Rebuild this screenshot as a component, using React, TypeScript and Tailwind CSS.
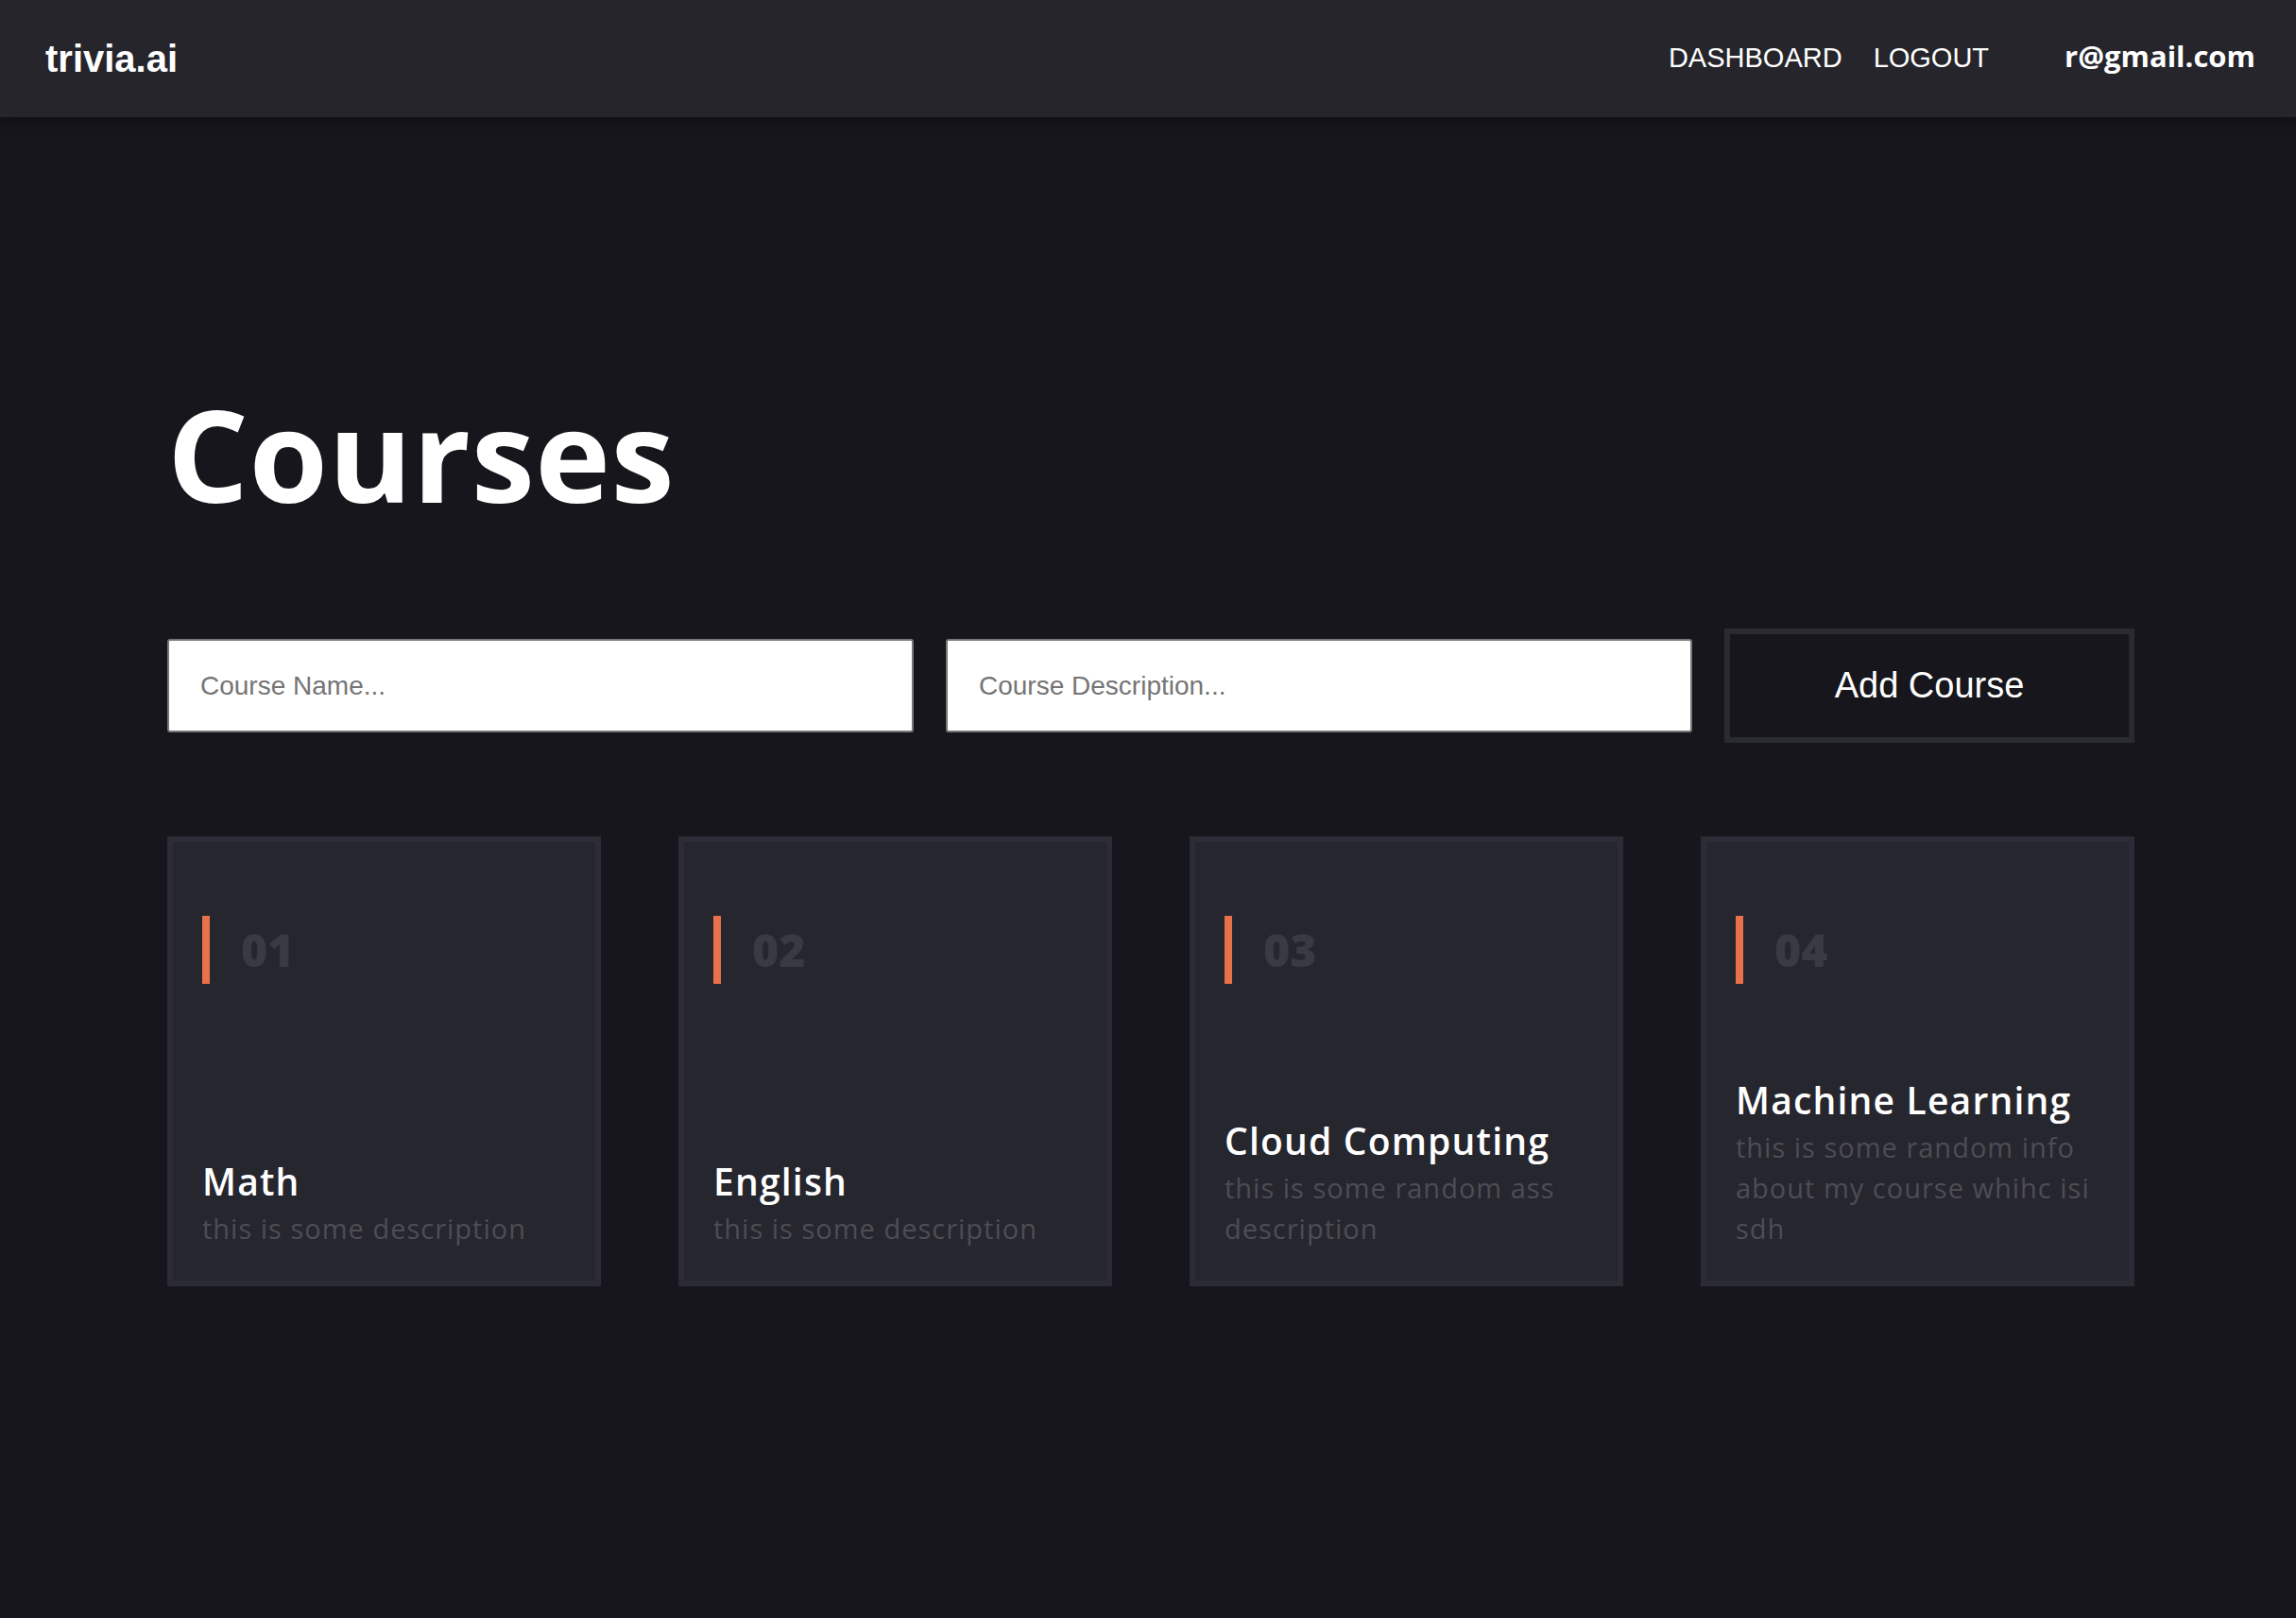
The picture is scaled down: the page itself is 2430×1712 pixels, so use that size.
const courses = [
  { num: "01", title: "Math", description: "this is some description" },
  { num: "02", title: "English", description: "this is some description" },
  { num: "03", title: "Cloud Computing", description: "this is some random ass description" },
  { num: "04", title: "Machine Learning", description: "this is some random info about my course whihc isi sdh" },
];

const heading = { fontFamily: '"Open Sans", "Noto Sans", sans-serif' };
const plain = { fontFamily: '"Liberation Sans", Arial, sans-serif' };

function Navbar() {
  return (
    <nav className="flex h-[124px] items-center justify-between bg-[#25252b] pl-[48px] pr-[43px] shadow-[0_4px_14px_rgba(0,0,0,0.35)]">
      <span className="text-[40px] font-bold text-white" style={plain}>
        trivia.ai
      </span>
      <div className="flex items-center">
        <a className="text-[29px] text-white" style={plain}>
          DASHBOARD
        </a>
        <a className="ml-[33px] text-[29px] text-white" style={plain}>
          LOGOUT
        </a>
        <span className="mb-[6px] ml-[80px] text-[31px] font-bold text-white" style={heading}>
          r@gmail.com
        </span>
      </div>
    </nav>
  );
}

function CourseCard({ num, title, description }: (typeof courses)[number]) {
  return (
    <div className="flex h-[476px] flex-col justify-between border-[6px] border-[#2b2c35] bg-[#25262e] pb-[34px] pl-[31px] pr-[14px] pt-[78px]">
      <div className="flex items-center">
        <span className="h-[72px] w-[8px] bg-[#e8714b]" />
        <span className="ml-[33px] text-[48px] font-extrabold leading-none text-[#393a42]" style={heading}>
          {num}
        </span>
      </div>
      <div style={heading}>
        <h3 className="mb-[4px] text-[39px] font-semibold leading-[48px] tracking-[1.2px] text-white">{title}</h3>
        <p className="text-[29px] leading-[43px] tracking-[1px] text-[#4d4d55]">{description}</p>
      </div>
    </div>
  );
}

export default function App() {
  return (
    <div className="min-h-[1712px] bg-[#16161c]">
      <Navbar />
      <main className="ml-[177px] w-[2082px]">
        <h1 className="mt-[289px] text-[135px] font-bold leading-none tracking-[0.5px] text-white" style={heading}>
          Courses
        </h1>
        <div className="mt-[117px] flex items-center gap-[34px]">
          <input
            placeholder="Course Name..."
            className="h-[99px] w-[790px] rounded-[3px] border-2 border-[#767676] bg-white px-[33px] text-[28px] text-black placeholder:text-[#757575]"
            style={plain}
          />
          <input
            placeholder="Course Description..."
            className="h-[99px] w-[790px] rounded-[3px] border-2 border-[#767676] bg-white px-[33px] text-[28px] text-black placeholder:text-[#757575]"
            style={plain}
          />
          <button className="h-[121px] w-[434px] border-[6px] border-[#2a2a31] text-[38px] text-white" style={plain}>
            Add Course
          </button>
        </div>
        <div className="mt-[99px] grid grid-cols-4 gap-[82px]">
          {courses.map((c) => (
            <CourseCard key={c.num} {...c} />
          ))}
        </div>
      </main>
    </div>
  );
}
